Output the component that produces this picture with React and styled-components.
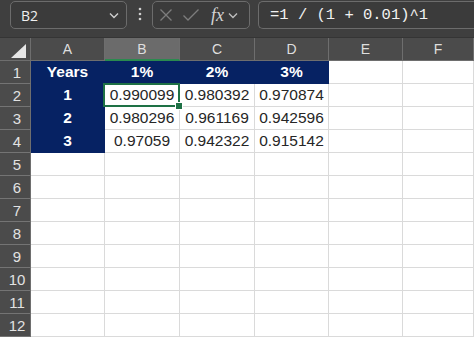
import React from 'react';
import styled, { createGlobalStyle } from 'styled-components';

const GlobalStyle = createGlobalStyle`
  html, body {
    margin: 0;
    padding: 0;
    background: #ffffff;
    overflow: hidden;
  }
  body {
    font-family: "Liberation Sans", Arial, sans-serif;
  }
`;

const Window = styled.div`
  width: 474px;
  height: 340px;
  overflow: hidden;
  display: flex;
  flex-direction: column;
`;

const FormulaBar = styled.div`
  display: flex;
  align-items: flex-start;
  height: 38px;
  padding: 1px 0 0 10px;
  box-sizing: border-box;
  background: #3f3f3f;
  border-bottom: 1px solid #353535;
`;

const Box = styled.div`
  display: flex;
  align-items: center;
  height: 28px;
  box-sizing: border-box;
  border: 1px solid #6c6c6c;
  border-radius: 5px;
  background: #3b3b3b;
`;

const NameBox = styled(Box)`
  width: 117px;
  padding: 0 6px 0 10px;
  justify-content: space-between;
  color: #f0f0f0;
  font-family: "Open Sans", "Noto Sans", sans-serif;
  font-size: 14px;
`;

const Dots = styled.div`
  width: 25px;
  display: flex;
  justify-content: center;
  padding-top: 6px;
`;

const FuncBox = styled(Box)`
  width: 98px;
  padding: 0 4px 0 6px;
  gap: 9px;
`;

const Fx = styled.span`
  font-family: "Liberation Serif", "DejaVu Serif", serif;
  font-style: italic;
  font-size: 18px;
  color: #d4d4d4;
  margin-left: 2px;
  margin-right: -6px;
`;

const FormulaInput = styled(Box)`
  flex: 1;
  margin-left: 8px;
  border-right: none;
  border-radius: 5px 0 0 5px;
  padding-left: 11px;
  color: #f2f2f2;
  font-family: "Liberation Mono", "DejaVu Sans Mono", monospace;
  font-size: 15.5px;
`;

const Grid = styled.div`
  display: grid;
  grid-template-columns: 31px 74px 75px 75px 74px 74px 1fr;
  grid-template-rows: 23px repeat(12, 23px);
`;

const Corner = styled.div`
  background: #4b4b4b;
  border-right: 1px solid #6e6e6e;
  border-bottom: 1px solid #6e6e6e;
  display: flex;
  align-items: flex-end;
  justify-content: flex-end;
  padding: 0 4px 2px 0;
`;

const ColHead = styled.div`
  background: ${p => (p.$active ? '#6b6b6b' : '#4b4b4b')};
  border-right: 1px solid #6e6e6e;
  border-bottom: ${p => (p.$active ? '2px solid #2b8a4f' : '1px solid #6e6e6e')};
  color: #dedede;
  font-size: 14px;
  display: flex;
  align-items: center;
  justify-content: center;
`;

const RowHead = styled.div`
  background: #4b4b4b;
  border-right: 1px solid #6e6e6e;
  border-bottom: 1px solid #747474;
  color: #e2e2e2;
  font-size: 15px;
  display: flex;
  align-items: center;
  justify-content: center;
  padding-left: 4px;
`;

const Cell = styled.div`
  position: relative;
  background: ${p => (p.$fill ? '#062263' : '#ffffff')};
  border-right: 1px solid ${p => (p.$fill ? '#062263' : '#dadada')};
  border-bottom: 1px solid ${p => (p.$fill ? '#062263' : '#dadada')};
  color: ${p => (p.$fill ? '#ffffff' : '#262626')};
  font-weight: ${p => (p.$fill ? 700 : 400)};
  font-size: 15.5px;
  display: flex;
  align-items: center;
  justify-content: center;
  white-space: nowrap;

  ${p => p.$selected && `
    &::after {
      content: '';
      position: absolute;
      left: -2px;
      top: -1px;
      right: -1px;
      bottom: -1px;
      border: 2px solid #1e7145;
    }
    &::before {
      content: '';
      position: absolute;
      right: -4px;
      bottom: -4px;
      width: 6px;
      height: 6px;
      background: #1e7145;
      border: 1px solid #ffffff;
      z-index: 2;
    }
  `}
`;

const Chevron = ({ color = '#cfcfcf' }) => (
  <svg width="12" height="12" viewBox="0 0 12 12">
    <path d="M2 4.5 L6 8.5 L10 4.5" fill="none" stroke={color} strokeWidth="1.4" />
  </svg>
);

const data = [
  ['Years', '1%', '2%', '3%'],
  ['1', '0.990099', '0.980392', '0.970874'],
  ['2', '0.980296', '0.961169', '0.942596'],
  ['3', '0.97059', '0.942322', '0.915142'],
];

const cols = ['A', 'B', 'C', 'D', 'E', 'F'];

const App = () => {
  const rows = Array.from({ length: 12 }, (_, i) => i);

  return (
    <Window>
      <GlobalStyle />
      <FormulaBar>
        <NameBox>
          <span>B2</span>
          <Chevron />
        </NameBox>
        <Dots>
          <svg width="4" height="14" viewBox="0 0 4 14">
            <circle cx="2" cy="2" r="1.3" fill="#cfcfcf" />
            <circle cx="2" cy="7" r="1.3" fill="#cfcfcf" />
            <circle cx="2" cy="12" r="1.3" fill="#cfcfcf" />
          </svg>
        </Dots>
        <FuncBox>
          <svg width="14" height="14" viewBox="0 0 14 14">
            <path d="M1.5 1.5 L12.5 12.5 M12.5 1.5 L1.5 12.5" stroke="#7d7d7d" strokeWidth="1.3" fill="none" />
          </svg>
          <svg width="18" height="14" viewBox="0 0 18 14">
            <path d="M1.5 7.5 L6 12 L16.5 1.5" stroke="#7d7d7d" strokeWidth="1.3" fill="none" />
          </svg>
          <Fx>fx</Fx>
          <Chevron color="#bdbdbd" />
        </FuncBox>
        <FormulaInput>=1 / (1 + 0.01)^1</FormulaInput>
      </FormulaBar>

      <Grid>
        <Corner>
          <svg width="15" height="14" viewBox="0 0 15 14">
            <path d="M15 0 L15 14 L0 14 Z" fill="#e6e6e6" />
          </svg>
        </Corner>
        {cols.map(c => (
          <ColHead key={c} $active={c === 'B'}>{c}</ColHead>
        ))}

        {rows.map(r => (
          <React.Fragment key={r}>
            <RowHead>{r + 1}</RowHead>
            {cols.map((c, ci) => {
              const value = data[r] && data[r][ci];
              const fill = ci < 4 && (r === 0 || (r < 4 && ci === 0));
              return (
                <Cell key={c} $fill={fill} $selected={r === 1 && ci === 1}>
                  {value}
                </Cell>
              );
            })}
          </React.Fragment>
        ))}
      </Grid>
    </Window>
  );
};

export default App;
